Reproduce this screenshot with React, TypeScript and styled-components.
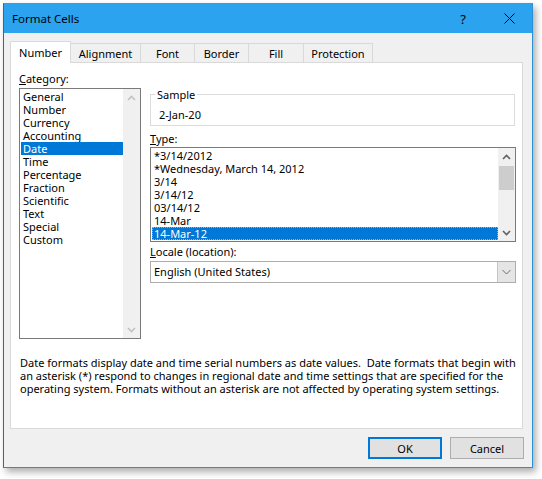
import React from 'react';
import styled, { createGlobalStyle } from 'styled-components';

const Global = createGlobalStyle`
  html, body { margin: 0; padding: 0; background: #ffffff; }
  body {
    font-family: "Noto Sans", "Open Sans", sans-serif;
    font-size: 11px;
    color: #000;
    -webkit-font-smoothing: antialiased;
  }
  #root { width: 542px; height: 479px; }
`;

const Window = styled.div`
  margin: 3px 0 0 3px;
  width: 530px;
  height: 465px;
  box-sizing: border-box;
  border: 1px solid #2b8fd6;
  border-left-color: #5e5e5e;
  border-top-color: #2aa1ec;
  background: #f0f0f0;
  box-shadow: 3px 4px 7px rgba(0, 0, 0, 0.32);
  display: flex;
  flex-direction: column;
`;

const TitleBar = styled.div`
  height: 29px;
  flex-shrink: 0;
  background: #2ba3ee;
  display: flex;
  align-items: center;
`;

const Title = styled.div`
  flex: 1;
  padding-left: 8px;
  font-size: 11.5px;
  line-height: 29px;
`;

const CaptionButton = styled.div`
  width: 46px;
  height: 29px;
  display: flex;
  align-items: center;
  justify-content: center;
  font-size: 13px;
`;

const Body = styled.div`
  flex: 1;
  display: flex;
  flex-direction: column;
  padding: 8px 9px 0 6px;
`;

const TabRow = styled.div`
  height: 21px;
  display: flex;
  align-items: flex-end;
  position: relative;
  z-index: 1;
`;

const Tab = styled.div<{ $w: number; $active?: boolean }>`
  box-sizing: border-box;
  width: ${(p) => p.$w}px;
  height: ${(p) => (p.$active ? 22 : 19)}px;
  margin-bottom: ${(p) => (p.$active ? -1 : 0)}px;
  margin-left: -1px;
  &:first-child { margin-left: 0; }
  border: 1px solid #d9d9d9;
  border-bottom: none;
  background: ${(p) => (p.$active ? '#ffffff' : '#f0f0f0')};
  position: relative;
  z-index: ${(p) => (p.$active ? 2 : 1)};
  display: flex;
  justify-content: center;
  padding-top: ${(p) => (p.$active ? 3 : 2)}px;
  line-height: 15px;
`;

const Panel = styled.div`
  box-sizing: border-box;
  height: 367px;
  border: 1px solid #d9d9d9;
  background: #ffffff;
  padding: 9px 0 0 8px;
  display: flex;
  flex-direction: column;
`;

const TopArea = styled.div`
  display: flex;
  gap: 9px;
`;

const LeftCol = styled.div`
  width: 122px;
  display: flex;
  flex-direction: column;
`;

const RightCol = styled.div`
  width: 366px;
  display: flex;
  flex-direction: column;
`;

const Label = styled.div<{ $mt?: number }>`
  line-height: 14px;
  height: 14px;
  margin-top: ${(p) => p.$mt ?? 0}px;
`;

const ListBox = styled.div<{ $h: number; $mt?: number }>`
  box-sizing: border-box;
  height: ${(p) => p.$h}px;
  margin-top: ${(p) => p.$mt ?? 0}px;
  border: 1px solid #7a7a7a;
  background: #fff;
  display: flex;
  overflow: hidden;
`;

const Items = styled.div`
  flex: 1;
  padding: 1px 0 0 1px;
  display: flex;
  flex-direction: column;
`;

const Item = styled.div<{ $sel?: boolean; $focus?: boolean }>`
  box-sizing: border-box;
  height: 13px;
  line-height: ${(p) => (p.$focus ? 11 : 13)}px;
  padding-left: ${(p) => (p.$focus ? 1 : 2)}px;
  white-space: nowrap;
  background: ${(p) => (p.$sel ? '#0078d7' : 'transparent')};
  color: ${(p) => (p.$sel ? '#ffffff' : '#000000')};
  border: ${(p) => (p.$focus ? '1px dotted #e8a040' : 'none')};
`;

const ScrollBar = styled.div`
  width: 17px;
  background: #f0f0f0;
  display: flex;
  flex-direction: column;
`;

const ScrollBtn = styled.div`
  height: 17px;
  display: flex;
  align-items: center;
  justify-content: center;
  flex-shrink: 0;
`;

const ScrollTrack = styled.div`
  flex: 1;
  display: flex;
  flex-direction: column;
`;

const Thumb = styled.div`
  height: 24px;
  margin: 1px 1px 0 1px;
  background: #cdcdcd;
`;

const Group = styled.fieldset`
  margin: 15px 0 0 0;
  width: 365px;
  box-sizing: border-box;
  min-inline-size: 0;
  border: 1px solid #dcdcdc;
  padding: 0 0 3px 8px;
`;

const Legend = styled.legend`
  padding: 0 2px;
  margin-left: -4px;
  line-height: 15px;
`;

const SampleValue = styled.div`
  margin-top: 6px;
  line-height: 14px;
`;

const Combo = styled.div`
  box-sizing: border-box;
  margin-top: 2px;
  height: 22px;
  border: 1px solid #adadad;
  background: #fff;
  display: flex;
`;

const ComboText = styled.div`
  flex: 1;
  padding-left: 3px;
  line-height: 20px;
`;

const ComboButton = styled.div`
  width: 17px;
  background: #e5e5e5;
  border-left: 1px solid #c5c5c5;
  display: flex;
  align-items: center;
  justify-content: center;
`;

const Description = styled.div`
  margin: 17px 0 0 1px;
  line-height: 13px;
  white-space: pre;
`;

const ButtonRow = styled.div`
  display: flex;
  justify-content: flex-end;
  gap: 8px;
  margin: 8px -1px 0 0;
`;

const Button = styled.div<{ $default?: boolean }>`
  box-sizing: border-box;
  width: 74px;
  height: 22px;
  background: #e1e1e1;
  border: ${(p) => (p.$default ? '2px solid #0078d7' : '1px solid #adadad')};
  display: flex;
  align-items: center;
  justify-content: center;
`;

const Chevron = ({ dir, color }: { dir: 'up' | 'down'; color: string }) => (
  <svg width="9" height="6" viewBox="0 0 9 6">
    <polyline
      points={dir === 'up' ? '1,5 4.5,1.5 8,5' : '1,1 4.5,4.5 8,1'}
      fill="none"
      stroke={color}
      strokeWidth="1.6"
    />
  </svg>
);

const ComboChevron = () => (
  <svg width="9" height="6" viewBox="0 0 9 6">
    <polyline points="0.5,1 4.5,5 8.5,1" fill="none" stroke="#6d6d6d" strokeWidth="1" />
  </svg>
);

const CloseIcon = () => (
  <svg width="11" height="11" viewBox="0 0 11 11">
    <path d="M0.5 0.5 L10.5 10.5 M10.5 0.5 L0.5 10.5" stroke="#000" strokeWidth="1" fill="none" />
  </svg>
);

const categories = [
  'General', 'Number', 'Currency', 'Accounting', 'Date', 'Time',
  'Percentage', 'Fraction', 'Scientific', 'Text', 'Special', 'Custom',
];

const types = [
  '*3/14/2012', '*Wednesday, March 14, 2012', '3/14', '3/14/12', '03/14/12', '14-Mar', '14-Mar-12',
];

const tabs: [string, number][] = [
  ['Number', 61], ['Alignment', 71], ['Font', 55], ['Border', 55], ['Fill', 56], ['Protection', 70],
];

export default function App() {
  return (
    <>
      <Global />
      <Window>
        <TitleBar>
          <Title>Format Cells</Title>
          <CaptionButton>?</CaptionButton>
          <CaptionButton><CloseIcon /></CaptionButton>
        </TitleBar>
        <Body>
          <TabRow>
            {tabs.map(([t, w], i) => (
              <Tab key={t} $w={w} $active={i === 0}>{t}</Tab>
            ))}
          </TabRow>
          <Panel>
            <TopArea>
              <LeftCol>
                <Label><u>C</u>ategory:</Label>
                <ListBox $h={251} $mt={2}>
                  <Items>
                    {categories.map((c) => (
                      <Item key={c} $sel={c === 'Date'}>{c}</Item>
                    ))}
                  </Items>
                  <ScrollBar>
                    <ScrollBtn><Chevron dir="up" color="#c2c2c2" /></ScrollBtn>
                    <ScrollTrack />
                    <ScrollBtn><Chevron dir="down" color="#c2c2c2" /></ScrollBtn>
                  </ScrollBar>
                </ListBox>
              </LeftCol>
              <RightCol>
                <Group>
                  <Legend>Sample</Legend>
                  <SampleValue>2-Jan-20</SampleValue>
                </Group>
                <Label $mt={6}><u>T</u>ype:</Label>
                <ListBox $h={95} $mt={1}>
                  <Items>
                    {types.map((t, i) => (
                      <Item key={t} $sel={i === 6} $focus={i === 6}>{t}</Item>
                    ))}
                  </Items>
                  <ScrollBar>
                    <ScrollBtn><Chevron dir="up" color="#606060" /></ScrollBtn>
                    <ScrollTrack><Thumb /></ScrollTrack>
                    <ScrollBtn><Chevron dir="down" color="#606060" /></ScrollBtn>
                  </ScrollBar>
                </ListBox>
                <Label $mt={3}><u>L</u>ocale (location):</Label>
                <Combo>
                  <ComboText>English (United States)</ComboText>
                  <ComboButton><ComboChevron /></ComboButton>
                </Combo>
              </RightCol>
            </TopArea>
            <Description>
              {'Date formats display date and time serial numbers as date values.  Date formats that begin with\nan asterisk (*) respond to changes in regional date and time settings that are specified for the\noperating system. Formats without an asterisk are not affected by operating system settings.'}
            </Description>
          </Panel>
          <ButtonRow>
            <Button $default>OK</Button>
            <Button>Cancel</Button>
          </ButtonRow>
        </Body>
      </Window>
    </>
  );
}
